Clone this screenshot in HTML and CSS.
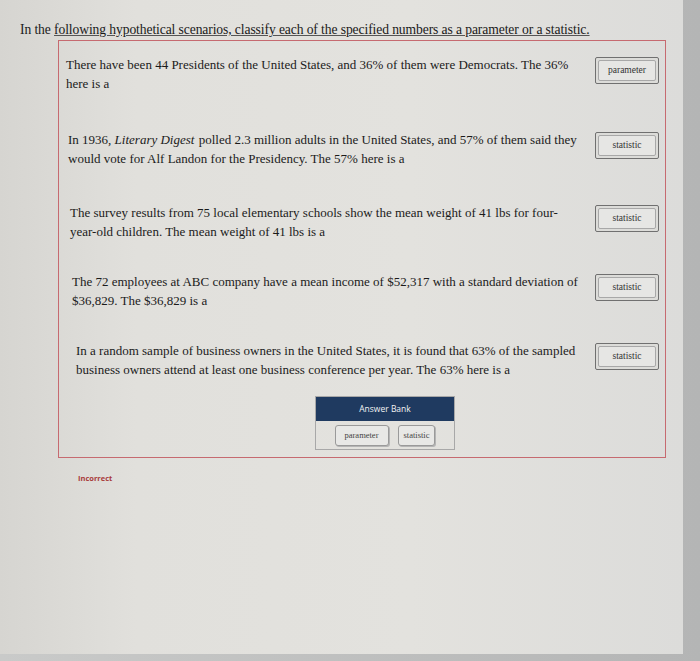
FILE: index.html
```html
<!DOCTYPE html>
<html>
<head>
<meta charset="utf-8">
<link rel="stylesheet" href="styles.css">
</head>
<body>
<div class="screen">
  <div class="page">
    <p class="prompt">In the <span class="u">following hypothetical scenarios, classify each of the specified numbers as a parameter or a statistic.</span></p>
    <div class="box">
      <div class="row r1">
        <div class="q">There have been 44 Presidents of the United States, and 36% of them were Democrats. The 36% here is a</div>
        <div class="slot"><span class="chip">parameter</span></div>
      </div>
      <div class="row r2">
        <div class="q">In 1936, <i>Literary Digest</i> polled 2.3 million adults in the United States, and 57% of them said they would vote for Alf Landon for the Presidency. The 57% here is a</div>
        <div class="slot"><span class="chip">statistic</span></div>
      </div>
      <div class="row r3">
        <div class="q">The survey results from 75 local elementary schools show the mean weight of 41 lbs for four-year-old children. The mean weight of 41 lbs is a</div>
        <div class="slot"><span class="chip">statistic</span></div>
      </div>
      <div class="row r4">
        <div class="q">The 72 employees at ABC company have a mean income of $52,317 with a standard deviation of $36,829. The $36,829 is a</div>
        <div class="slot"><span class="chip">statistic</span></div>
      </div>
      <div class="row r5">
        <div class="q">In a random sample of business owners in the United States, it is found that 63% of the sampled business owners attend at least one business conference per year. The 63% here is a</div>
        <div class="slot"><span class="chip">statistic</span></div>
      </div>
      <div class="bank">
        <div class="bank-head">Answer Bank</div>
        <div class="bank-body">
          <span class="bchip">parameter</span>
          <span class="bchip">statistic</span>
        </div>
      </div>
    </div>
    <div class="incorrect">Incorrect</div>
  </div>
</div>
</body>
</html>
```
FILE: styles.css
```css
html, body {
  margin: 0;
  padding: 0;
}
body {
  width: 700px;
  height: 661px;
  background: #8f9191;
  overflow: hidden;
}
.screen {
  width: 700px;
  height: 661px;
  background: linear-gradient(90deg, #c9cac9 0%, #b4b5b5 100%);
  overflow: hidden;
}
.page {
  width: 683px;
  height: 654px;
  background: linear-gradient(90deg, #d6d5d1 0%, #e1e0dc 20%, #e3e2de 60%, #dcdcda 100%);
  box-sizing: border-box;
  padding: 21px 0 0 20px;
}
.prompt {
  margin: 0;
  font-family: "Liberation Serif", "Times New Roman", serif;
  font-size: 13.6px;
  color: #1a1a1a;
  letter-spacing: -0.1px;
  line-height: 18px;
}
.prompt .u {
  text-decoration: underline;
  text-decoration-color: #555;
}
.box {
  margin: 1px 0 0 38px;
  width: 608px;
  height: 418px;
  box-sizing: border-box;
  border: 1px solid #c66a70;
  padding: 14px 4px 0 7px;
}
.row {
  display: flex;
  justify-content: space-between;
  align-items: flex-start;
}
.r1 { height: 75px; }
.r2 { height: 73px; padding-left: 2px; }
.r3 { height: 69px; padding-left: 4px; }
.r4 { height: 69px; padding-left: 6px; }
.r5 { height: 55px; padding-left: 10px; }
.q {
  width: 511px;
  font-family: "Liberation Serif", "Times New Roman", serif;
  font-size: 13px;
  line-height: 19px;
  color: #1b1b1b;
}
.q i {
  padding-right: 1px;
}
.slot {
  margin-top: 2px;
  margin-right: 2px;
  border: 1.5px solid #707070;
  border-radius: 2px;
  padding: 2px;
  width: 58px;
  display: flex;
  background: #dcdcd9;
}
.chip {
  flex: 1;
  text-align: center;
  border: 1px solid #a8a8a8;
  border-radius: 2px;
  background: #e6e6e4;
  font-family: "Liberation Serif", "Times New Roman", serif;
  font-size: 9.5px;
  line-height: 19px;
  color: #333;
}
.bank {
  margin: 0 0 0 249px;
  width: 138px;
  border: 1px solid #a8a8a8;
}
.bank-head {
  background: #1f3a60;
  color: #f2f2f2;
  font-family: "Open Sans", "Liberation Sans", sans-serif;
  font-size: 8.5px;
  text-align: center;
  line-height: 24px;
  height: 24px;
}
.bank-body {
  display: flex;
  justify-content: center;
  gap: 9px;
  padding: 4px 0 3px 0;
}
.bchip {
  border: 1px solid #9a9a9a;
  border-radius: 3px;
  box-shadow: 1px 1px 0 #b5b5b5;
  background: #e8e8e6;
  font-family: "Liberation Serif", "Times New Roman", serif;
  font-size: 8.5px;
  line-height: 19px;
  padding: 0 5px;
  color: #444;
}
.bchip:first-child { width: 42px; text-align: center; }
.incorrect {
  margin: 15px 0 0 58px;
  font-family: "Open Sans", "Liberation Sans", sans-serif;
  font-size: 7.5px;
  font-weight: bold;
  color: #a83a3a;
}
```
